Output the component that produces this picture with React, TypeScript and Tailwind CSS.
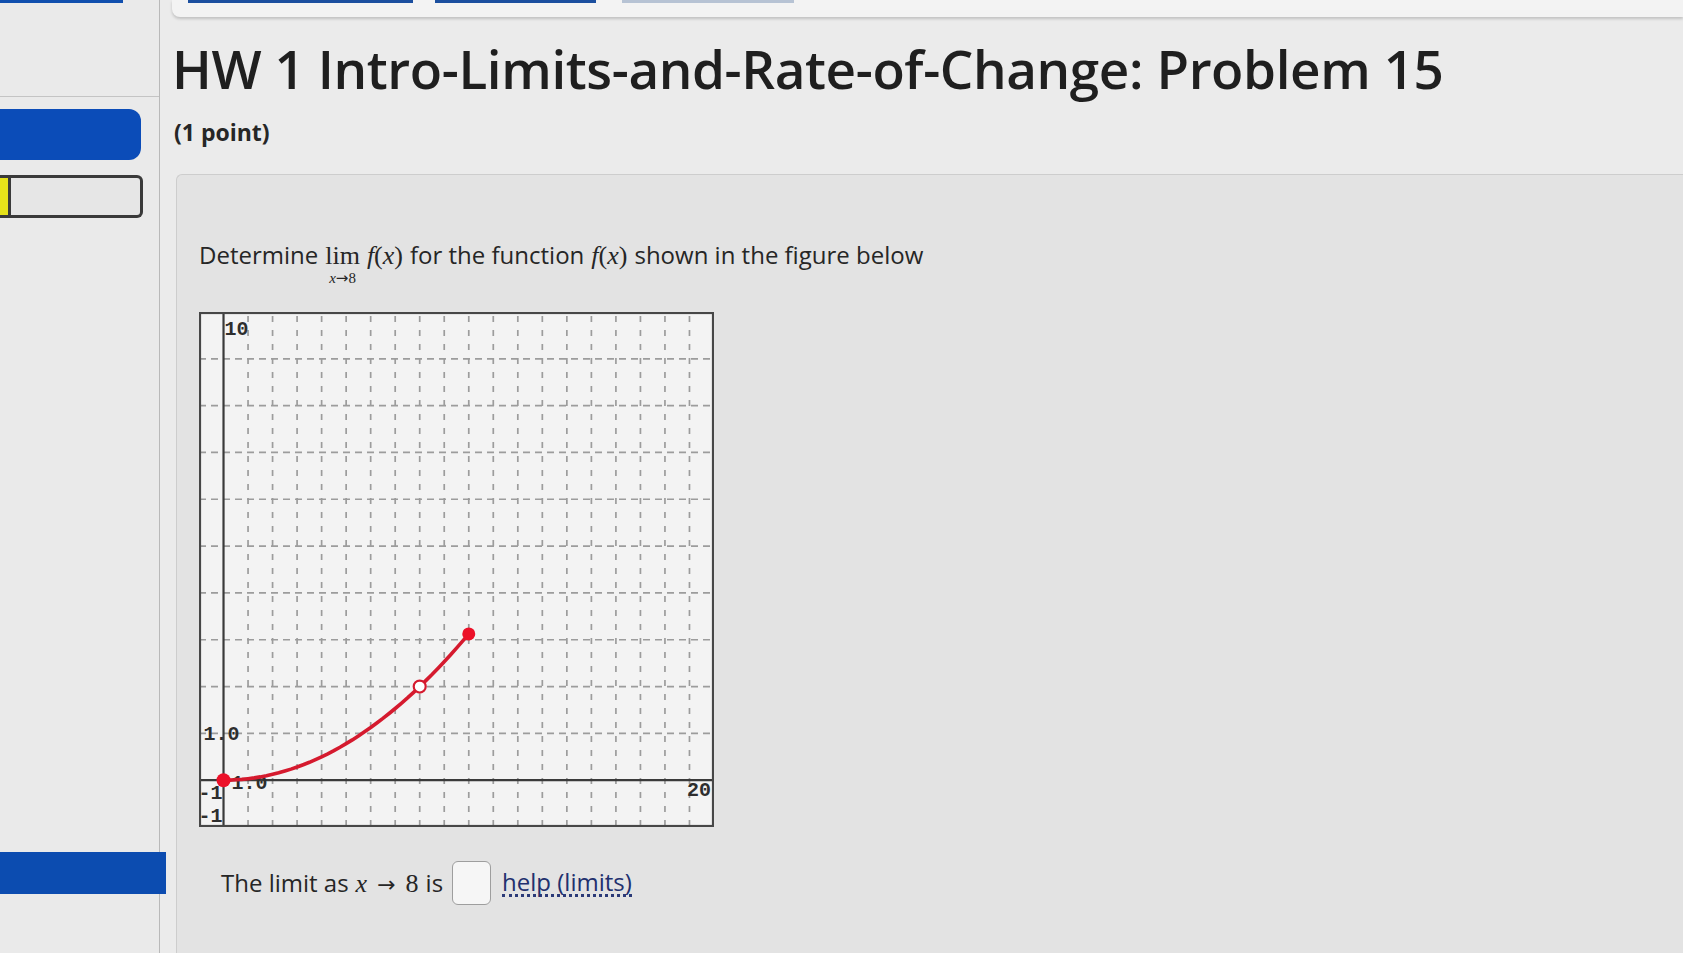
import React from 'react';

const W = 515;
const H = 515;
const X = (x: number) => ((x + 1) * W) / 21;
const Y = (y: number) => ((10 - y) * H) / 11;

const LimitGraph = () => {
  const pts: string[] = [];
  for (let x = 0; x <= 10.001; x += 0.25) {
    pts.push(`${X(x).toFixed(1)},${Y((x * x) / 32).toFixed(1)}`);
  }
  const label = { fontFamily: '"Liberation Mono", monospace', fontWeight: 700, fontSize: 20, fill: '#2e2e2e' };

  return (
    <svg width={W} height={H} viewBox={`0 0 ${W} ${H}`} className="block bg-[#f3f3f3]">
      {/* vertical grid */}
      {Array.from({ length: 19 }, (_, i) => i + 1).map((x) => (
        <line key={'v' + x} x1={X(x)} y1={4} x2={X(x)} y2={H} stroke="#9c9c9c" strokeWidth={1.7} strokeDasharray="6 8" />
      ))}
      {/* horizontal grid */}
      {Array.from({ length: 9 }, (_, i) => i + 1).map((y) => (
        <line key={'h' + y} x1={0} y1={Y(y)} x2={W} y2={Y(y)} stroke="#9c9c9c" strokeWidth={1.7} strokeDasharray="7 5" />
      ))}
      {/* axes */}
      <line x1={0} y1={Y(0)} x2={W} y2={Y(0)} stroke="#3a3a3a" strokeWidth={2.2} />
      <line x1={X(0)} y1={0} x2={X(0)} y2={H} stroke="#3a3a3a" strokeWidth={2.2} />
      <rect x={1} y={1} width={W - 2} height={H - 2} fill="none" stroke="#474747" strokeWidth={2.2} />

      {/* labels */}
      <text x={X(0) + 1} y={23} style={label}>10</text>
      <text x={X(0) - 20} y={Y(1) + 7} style={label}>1.0</text>
      <text x={X(0) + 8} y={Y(0) + 9} style={label}>1.0</text>
      <text x={X(0) - 1} y={Y(0) + 19} textAnchor="end" style={label}>-1</text>
      <text x={X(0) - 1} y={H - 5} textAnchor="end" style={label}>-1</text>
      <text x={W - 3} y={Y(0) + 16} textAnchor="end" style={label}>20</text>

      {/* function */}
      <polyline points={pts.join(' ')} fill="none" stroke="#d51a2e" strokeWidth={3.6} strokeLinecap="round" />
      <circle cx={X(0)} cy={Y(0)} r={7} fill="#ec1028" />
      <circle cx={X(10)} cy={Y(100 / 32)} r={6.5} fill="#ec1028" />
      <circle cx={X(8)} cy={Y(2)} r={6} fill="#ffffff" stroke="#d51a2e" strokeWidth={2.2} />
    </svg>
  );
};

const App = () => {
  return (
    <div className="flex h-[953px] w-[1683px] overflow-hidden bg-[#ebebeb] font-['Open_Sans',sans-serif] text-[#262626]">
      {/* sidebar */}
      <aside className="flex w-[160px] shrink-0 flex-col border-r border-[#b9b9b9] bg-[#eaeaea]">
        <div className="h-[3px] w-[123px] bg-[#114fae]" />
        <div className="h-[94px] border-b border-[#c4c4c4]" />
        <div className="mt-[12px] h-[51px] w-[141px] rounded-r-xl bg-[#0b4cb8]" />
        <div className="mt-[15px] flex h-[43px] w-[143px] overflow-hidden rounded-r-md border-[3px] border-l-0 border-[#3a3a3a] bg-[#e6e6e6]">
          <div className="w-[8px] bg-[#e6e21a]" />
          <div className="flex-1 border-l-[3px] border-[#3a3a3a]" />
        </div>
        <div className="mt-[634px] h-[42px] w-[166px] bg-[#0c4cb0]" />
      </aside>

      {/* main */}
      <main className="flex min-w-0 flex-1 flex-col">
        <div className="ml-[12px] flex h-[17px] gap-[22px] rounded-bl-lg bg-[#f3f3f3] pl-[16px] shadow-[0_2px_3px_rgba(0,0,0,0.18)]">
          <div className="h-[3px] w-[225px] bg-[#1b4f9f]" />
          <div className="h-[3px] w-[161px] bg-[#1b4f9f]" />
          <div className="ml-[4px] h-[3px] w-[172px] bg-[#b7c3d4]" />
        </div>

        <h1 className="ml-[12px] mt-[20px] text-[53px] font-semibold leading-[64px] tracking-[-0.4px] text-[#1f1f1f]">
          HW 1 Intro-Limits-and-Rate-of-Change: Problem 15
        </h1>
        <p className="ml-[14px] mt-[16px] text-[23px] font-bold leading-[30px]">(1 point)</p>

        <section className="ml-[16px] mt-[27px] flex-1 rounded-tl-md border-l border-t border-[#cdcdcd] bg-[#e3e3e3] pl-[22px] pt-[61px]">
          <p className="flex items-baseline gap-[7px] text-[24px]">
            <span>Determine</span>
            <span className="inline-flex flex-col items-center font-['Liberation_Serif',serif] text-[26px] leading-[28px]">
              <span>lim</span>
              <span className="text-[15px] leading-[17px]">
                <i>x</i>
                <span className="font-['DejaVu_Sans',sans-serif] text-[15px]">→</span>8
              </span>
            </span>
            <span className="font-['Liberation_Serif',serif] text-[26px]">
              <i>f</i>(<i>x</i>)
            </span>
            <span>for the function</span>
            <span className="font-['Liberation_Serif',serif] text-[26px]">
              <i>f</i>(<i>x</i>)
            </span>
            <span>shown in the figure below</span>
          </p>

          <div className="mt-[25px] w-fit">
            <LimitGraph />
          </div>

          <div className="ml-[22px] mt-[34px] flex items-center gap-[7px] text-[24px]">
            <span>The limit as</span>
            <span className="inline-flex items-baseline font-['Liberation_Serif',serif] text-[26px]">
              <i>x</i>
              <span className="mx-[10px] font-['DejaVu_Sans',sans-serif] text-[22px]">→</span>
              <span>8</span>
            </span>
            <span>is</span>
            <span className="ml-[2px] h-[44px] w-[39px] rounded-md border border-[#9e9e9e] bg-[#f6f6f6]" />
            <a href="#" className="ml-[4px] border-b-[3px] border-dotted border-[#2b3a78] leading-[24px] text-[#22306e]">
              help (limits)
            </a>
          </div>
        </section>
      </main>
    </div>
  );
};

export default App;
